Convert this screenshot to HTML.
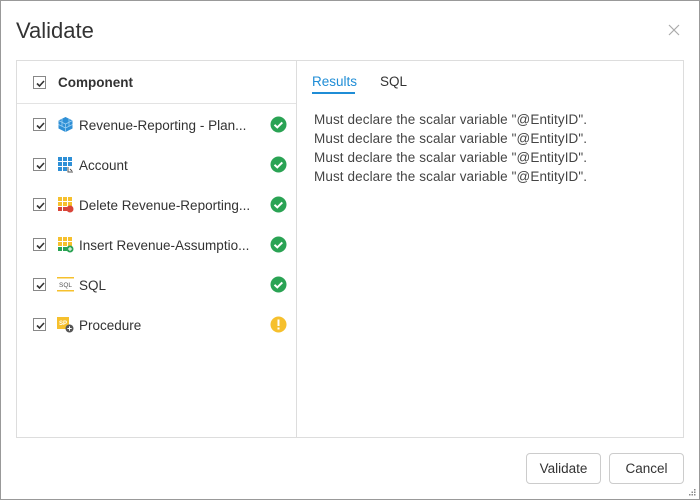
<!DOCTYPE html>
<html><head><meta charset="utf-8"><style>
*{box-sizing:border-box;margin:0;padding:0}
body{width:700px;height:500px;background:#fff;font-family:"Liberation Sans",sans-serif;color:#333;position:relative;overflow:hidden}
.frame{position:absolute;left:0;top:0;width:700px;height:500px;border:1px solid #999}
.title{position:absolute;left:16px;top:18px;font-size:22px;color:#333}
.close{position:absolute;left:668px;top:24px}
.box{position:absolute;left:16px;top:60px;width:668px;height:378px;border:1px solid #ddd}
.left{position:absolute;left:0;top:0;width:280px;height:376px;border-right:1px solid #ddd}
.hdr{height:43px;border-bottom:1px solid #e3e3e3;position:relative}
.cb{position:absolute;left:16px;width:13px;height:13px;border:1px solid #888;background:#fff}
.cb svg{position:absolute;left:1px;top:1px}
.row{position:absolute;left:0;width:280px;height:40px}
.row .cb{top:13px}
.row .ic{position:absolute;left:40px;top:11px;width:17px;height:17px}
.row .tx{position:absolute;left:62px;top:13px;font-size:13.5px;color:#333;white-space:nowrap}
.row .st{position:absolute;left:253px;top:11px}
.tab{position:absolute;top:14px;font-size:13.5px}
.msg{position:absolute;top:110px;font-size:13.5px;line-height:19px;color:#444;letter-spacing:0.1px}
.btn{position:absolute;top:453px;height:31px;border:1px solid #ccc;border-radius:4px;font-size:13.5px;text-align:center;line-height:29px;color:#333}
</style></head><body>
<div class="frame"></div>
<div class="title">Validate</div>
<svg class="close" width="12" height="12"><path d="M1 1l10 10M11 1L1 11" stroke="#aaa" stroke-width="1.2"/></svg>
<div class="box">
 <div class="left">
  <div class="hdr"><div class="cb" style="top:15px"><svg width="11" height="11"><path d="M2 5.5l2.5 2.5 4.5-5" stroke="#333" stroke-width="1.6" fill="none"/></svg></div>
  <div style="position:absolute;left:41px;top:14px;font-weight:bold;font-size:13.5px">Component</div></div>
  <div class="row" style="top:44px"><div class="cb"><svg width="11" height="11"><path d="M2 5.5l2.5 2.5 4.5-5" stroke="#333" stroke-width="1.6" fill="none"/></svg></div>
   <svg class="ic" viewBox="0 0 17 17"><path d="M8.5 1l7 3.5v8l-7 3.5-7-3.5v-8z" fill="#2e8fd6"/><path d="M1.5 4.5l7 3.5 7-3.5M8.5 8v8M5 2.7v8M12 2.7v8M1.5 8.5l7 3.5 7-3.5" stroke="#9fd0f2" stroke-width="0.8" fill="none"/></svg>
   <div class="tx">Revenue-Reporting - Plan...</div>
   <svg class="st" width="17" height="17"><circle cx="8.5" cy="8.5" r="8" fill="#2aa354"/><path d="M4.5 8.8l2.8 2.6 5-5" stroke="#fff" stroke-width="2" fill="none"/></svg></div>
  <div class="row" style="top:84px"><div class="cb"><svg width="11" height="11"><path d="M2 5.5l2.5 2.5 4.5-5" stroke="#333" stroke-width="1.6" fill="none"/></svg></div>
   <svg class="ic" viewBox="0 0 17 17"><g fill="#2e8fd6"><rect x="1" y="1" width="4" height="4"/><rect x="6" y="1" width="4" height="4"/><rect x="11" y="1" width="4" height="4"/><rect x="1" y="6" width="4" height="4"/><rect x="6" y="6" width="4" height="4"/><rect x="11" y="6" width="4" height="4"/><rect x="1" y="11" width="4" height="4"/><rect x="6" y="11" width="4" height="4"/></g><path d="M11 11v5h5M13 13l2 2" stroke="#555" fill="none"/></svg>
   <div class="tx">Account</div>
   <svg class="st" width="17" height="17"><circle cx="8.5" cy="8.5" r="8" fill="#2aa354"/><path d="M4.5 8.8l2.8 2.6 5-5" stroke="#fff" stroke-width="2" fill="none"/></svg></div>
  <div class="row" style="top:124px"><div class="cb"><svg width="11" height="11"><path d="M2 5.5l2.5 2.5 4.5-5" stroke="#333" stroke-width="1.6" fill="none"/></svg></div>
   <svg class="ic" viewBox="0 0 17 17"><g fill="#f6c02d"><rect x="1" y="1" width="4" height="4"/><rect x="6" y="1" width="4" height="4"/><rect x="11" y="1" width="4" height="4"/><rect x="1" y="6" width="4" height="4"/><rect x="6" y="6" width="4" height="4"/><rect x="11" y="6" width="4" height="4"/></g><g fill="#d9453a"><rect x="1" y="11" width="4" height="4"/><rect x="6" y="11" width="4" height="4"/><circle cx="13" cy="13" r="3.5"/></g></svg>
   <div class="tx">Delete Revenue-Reporting...</div>
   <svg class="st" width="17" height="17"><circle cx="8.5" cy="8.5" r="8" fill="#2aa354"/><path d="M4.5 8.8l2.8 2.6 5-5" stroke="#fff" stroke-width="2" fill="none"/></svg></div>
  <div class="row" style="top:164px"><div class="cb"><svg width="11" height="11"><path d="M2 5.5l2.5 2.5 4.5-5" stroke="#333" stroke-width="1.6" fill="none"/></svg></div>
   <svg class="ic" viewBox="0 0 17 17"><g fill="#f6c02d"><rect x="1" y="1" width="4" height="4"/><rect x="6" y="1" width="4" height="4"/><rect x="11" y="1" width="4" height="4"/><rect x="1" y="6" width="4" height="4"/><rect x="6" y="6" width="4" height="4"/><rect x="11" y="6" width="4" height="4"/></g><g fill="#2aa354"><rect x="1" y="11" width="4" height="4"/><rect x="6" y="11" width="4" height="4"/><circle cx="13" cy="13" r="3.5"/></g><path d="M13 11v4M11 13h4" stroke="#fff"/></svg>
   <div class="tx">Insert Revenue-Assumptio...</div>
   <svg class="st" width="17" height="17"><circle cx="8.5" cy="8.5" r="8" fill="#2aa354"/><path d="M4.5 8.8l2.8 2.6 5-5" stroke="#fff" stroke-width="2" fill="none"/></svg></div>
  <div class="row" style="top:204px"><div class="cb"><svg width="11" height="11"><path d="M2 5.5l2.5 2.5 4.5-5" stroke="#333" stroke-width="1.6" fill="none"/></svg></div>
   <svg class="ic" viewBox="0 0 17 17"><rect x="0" y="1" width="17" height="1.5" fill="#f6c02d"/><rect x="0" y="14" width="17" height="1.5" fill="#f6c02d"/><text x="8.5" y="11" font-size="6.5" text-anchor="middle" fill="#555" font-family="Liberation Sans">SQL</text></svg>
   <div class="tx">SQL</div>
   <svg class="st" width="17" height="17"><circle cx="8.5" cy="8.5" r="8" fill="#2aa354"/><path d="M4.5 8.8l2.8 2.6 5-5" stroke="#fff" stroke-width="2" fill="none"/></svg></div>
  <div class="row" style="top:244px"><div class="cb"><svg width="11" height="11"><path d="M2 5.5l2.5 2.5 4.5-5" stroke="#333" stroke-width="1.6" fill="none"/></svg></div>
   <svg class="ic" viewBox="0 0 17 17"><rect x="0" y="1" width="12" height="12" fill="#f6c02d"/><text x="6" y="9" font-size="6" text-anchor="middle" fill="#fff" font-family="Liberation Sans" font-weight="bold">SP</text><circle cx="12.5" cy="12.5" r="4" fill="#555"/><path d="M12.5 10.3v4.4M10.3 12.5h4.4" stroke="#fff"/></svg>
   <div class="tx">Procedure</div>
   <svg class="st" width="17" height="17"><circle cx="8.5" cy="8.5" r="8" fill="#f6c02d"/><rect x="7.5" y="3.5" width="2" height="6.5" fill="#fff"/><rect x="7.5" y="11.5" width="2" height="2" fill="#fff"/></svg></div>
 </div>
</div>
<div class="tab" style="left:312px;top:74px;color:#1f8dd6">Results</div>
<div style="position:absolute;left:312px;top:92px;width:43px;height:2px;background:#1f8dd6"></div>
<div class="tab" style="left:380px;top:74px;color:#333">SQL</div>
<div class="msg" style="left:314px">Must declare the scalar variable "@EntityID".<br>Must declare the scalar variable "@EntityID".<br>Must declare the scalar variable "@EntityID".<br>Must declare the scalar variable "@EntityID".</div>
<div class="btn" style="left:526px;width:75px">Validate</div>
<div class="btn" style="left:609px;width:75px">Cancel</div>
<svg style="position:absolute;left:689px;top:489px" width="8" height="8"><g fill="#888"><rect x="5" y="0" width="1.5" height="1.5"/><rect x="2.5" y="2.5" width="1.5" height="1.5"/><rect x="5" y="2.5" width="1.5" height="1.5"/><rect x="0" y="5" width="1.5" height="1.5"/><rect x="2.5" y="5" width="1.5" height="1.5"/><rect x="5" y="5" width="1.5" height="1.5"/></g></svg>
</body></html>
